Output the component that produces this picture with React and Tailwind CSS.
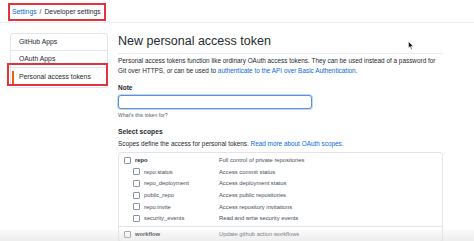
import React from "react";

const Box = () => (
  <span className="inline-block w-[7px] h-[7px] border border-[#8c959f] rounded-[1px] bg-white shrink-0" />
);

const scopes = [
  ["repo:status", "Access commit status"],
  ["repo_deployment", "Access deployment status"],
  ["public_repo", "Access public repositories"],
  ["repo:invite", "Access repository invitations"],
  ["security_events", "Read and write security events"],
];

export default function App() {
  return (
    <div
      className="relative w-[474px] h-[241px] overflow-hidden bg-white text-[#24292f]"
      style={{ fontFamily: '"Liberation Sans", Arial, sans-serif' }}
    >
      {/* breadcrumb */}
      <div className="h-[23px] border-b border-[#eaecef] flex items-start pt-[3px] pl-[8px]">
        <div className="border-2 border-[#e3343e] h-[18px] w-[98px] flex items-center pl-[2px] text-[6.8px] text-[#24292f]">
          <span className="text-[#0969da]">Settings</span>
          <span className="mx-[3px]">/</span>
          <span>Developer settings</span>
        </div>
      </div>

      <div className="flex pt-[10px]">
        {/* sidebar */}
        <div className="ml-[10px] w-[98px] shrink-0">
          <div className="border border-[#e1e4e8] rounded-[3px] text-[6.8px]">
            <div className="h-[17px] flex items-center pl-[8px] border-b border-[#e1e4e8]">GitHub Apps</div>
            <div className="h-[17px] flex items-center pl-[8px] border-b border-[#e1e4e8]">OAuth Apps</div>
            <div className="relative h-[19px] flex items-center pl-[8px]">
              <span className="absolute left-[1px] top-[3px] bottom-[3px] w-[1.5px] bg-[#e36209]" />
              Personal access tokens
            </div>
          </div>
        </div>

        {/* main */}
        <div className="ml-[10px] w-[325px]">
          <div className="text-[12.5px] leading-[16px] pb-[4px] border-b border-[#eaecef]">
            New personal access token
          </div>
          <p className="text-[6.4px] leading-[10px] mt-[2px] text-[#24292f]">
            Personal access tokens function like ordinary OAuth access tokens. They can be used instead of a password for Git over HTTPS, or can be used to{" "}
            <span className="text-[#0969da]">authenticate to the API over Basic Authentication</span>.
          </p>
          <div className="text-[6.5px] font-bold mt-[7px] leading-[9px]">Note</div>
          <div className="mt-[3px] w-[194px] h-[14px] rounded-[3px] border border-[#5b8fd8] shadow-[0_0_0_1px_rgba(9,105,218,0.25)] bg-white" />
          <div className="text-[5.2px] text-[#57606a] mt-[3px] leading-[7px]">What's this token for?</div>
          <div className="text-[6.7px] font-bold mt-[8px] leading-[9px]">Select scopes</div>
          <div className="text-[6.4px] mt-[3px] leading-[9px]">
            Scopes define the access for personal tokens.{" "}
            <span className="text-[#0969da]">Read more about OAuth scopes.</span>
          </div>
          <div className="mt-[4px] border border-[#e1e4e8] rounded-[3px] text-[5.8px]">
            <div className="border-b border-[#e1e4e8] pb-[2px]">
              <div className="h-[12px] flex items-center pl-[5px] mt-[1px]">
                <Box />
                <span className="ml-[4px] w-[84px] font-semibold text-[#24292f]">repo</span>
                <span className="text-[#444c56]">Full control of private repositories</span>
              </div>
              {scopes.map(([n, d]) => (
                <div key={n} className="h-[11.7px] flex items-center pl-[14px]">
                  <Box />
                  <span className="ml-[4px] w-[75px] text-[#444c56]">{n}</span>
                  <span className="text-[#444c56]">{d}</span>
                </div>
              ))}
            </div>
            <div className="h-[14px] flex items-center pl-[5px]">
              <Box />
              <span className="ml-[4px] w-[84px] font-semibold">workflow</span>
              <span className="text-[#444c56]">Update github action workflows</span>
            </div>
          </div>
        </div>
      </div>

      {/* red annotation around selected sidebar item */}
      <div className="absolute left-[7px] top-[63px] w-[101px] h-[23px] border-2 border-[#e3343e] pointer-events-none" />

      {/* bottom gray band */}
      <div className="absolute left-0 right-0 bottom-0 h-[11px] bg-gradient-to-b from-[rgba(230,230,230,0.2)] to-[rgba(220,220,220,0.5)] pointer-events-none" />

      {/* cursor */}
      <svg className="absolute left-[408px] top-[41px]" width="6" height="9" viewBox="0 0 6 9">
        <path d="M0.5 0.5 L0.5 7 L2 5.6 L3.2 8.3 L4.2 7.9 L3 5.2 L5.2 5.2 Z" fill="#111" stroke="#fff" strokeWidth="0.5" />
      </svg>
    </div>
  );
}
